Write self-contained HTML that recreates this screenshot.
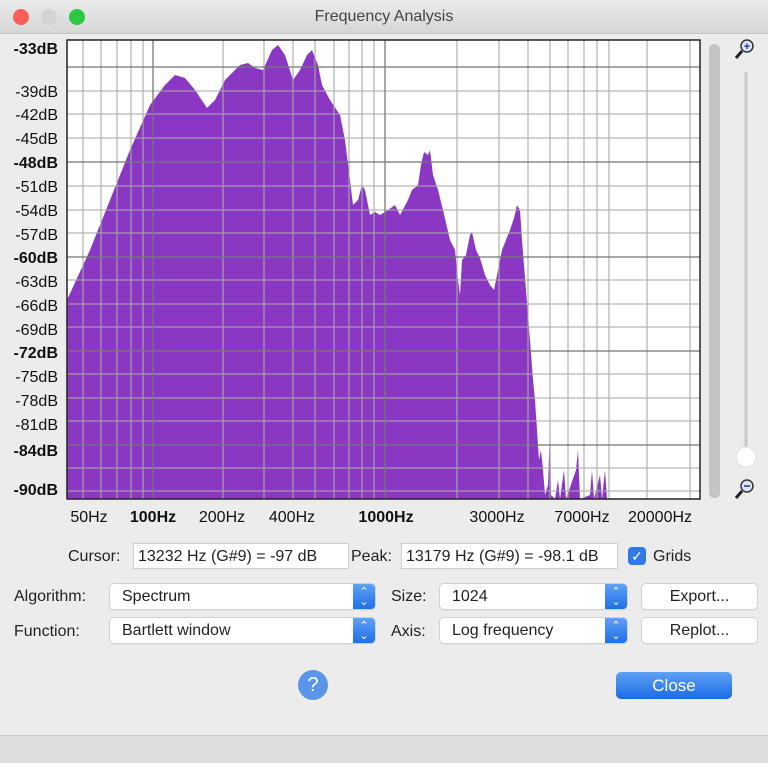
<!DOCTYPE html>
<html><head><meta charset="utf-8"><style>
body{margin:0;width:768px;height:762px;background:#ececec;font-family:"Liberation Sans",sans-serif;overflow:hidden;position:relative}
.tb{position:absolute;left:0;top:0;width:768px;height:33px;background:linear-gradient(#ebebeb,#d6d6d6);border-bottom:1px solid #c4c4c4}
.dot{position:absolute;top:9px;width:16px;height:16px;border-radius:50%}
.title{position:absolute;top:8px;left:0;width:768px;text-align:center;font-size:16px;color:#444}
.lbl{position:absolute;font-size:16px;color:#222}
.field{position:absolute;background:#fff;border:1px solid #cfcfcf;height:26px;font-size:16px;line-height:26px;padding-left:4px;overflow:hidden;white-space:nowrap;box-sizing:border-box;color:#222}
.sel{position:absolute;background:#fff;border-radius:4px;box-shadow:0 0 0 1px #d0d0d0,0 1px 1px #bbb;height:25px;font-size:16px;line-height:25px;padding-left:12px;box-sizing:border-box;color:#222}
.sel i{position:absolute;right:0;top:0;width:22px;height:25px;background:linear-gradient(#5ea2f5,#1f6fe6);border-radius:0 4px 4px 0;color:#fff;font-style:normal;font-size:11px;line-height:10px;text-align:center;padding-top:3px;box-sizing:border-box}
.btn{position:absolute;background:#fff;border-radius:4px;box-shadow:0 0 0 1px #d0d0d0,0 1px 1px #bbb;height:25px;font-size:16px;line-height:25px;text-align:center;color:#222}
</style></head><body>
<div class="tb"></div>
<div class="dot" style="left:13px;background:#fc5f57"></div>
<div class="dot" style="left:41px;background:#d4d4d4"></div>
<div class="dot" style="left:69px;background:#2ac940"></div>
<div class="title">Frequency Analysis</div>
<svg width="768" height="530" style="position:absolute;left:0;top:0" font-family="Liberation Sans" font-size="15">
<rect x="67" y="40" width="633" height="459" fill="#fff"/>
<g font-size="16" text-anchor="end" fill="#111">
<text x="58" y="54" font-weight="bold">-33dB</text>
<text x="58" y="97">-39dB</text><text x="58" y="120">-42dB</text><text x="58" y="144">-45dB</text>
<text x="58" y="168" font-weight="bold">-48dB</text><text x="58" y="192">-51dB</text><text x="58" y="216">-54dB</text><text x="58" y="240">-57dB</text>
<text x="58" y="263" font-weight="bold">-60dB</text><text x="58" y="287">-63dB</text><text x="58" y="311">-66dB</text><text x="58" y="335">-69dB</text>
<text x="58" y="358" font-weight="bold">-72dB</text><text x="58" y="382">-75dB</text><text x="58" y="406">-78dB</text><text x="58" y="430">-81dB</text>
<text x="58" y="456" font-weight="bold">-84dB</text>
<text x="58" y="495" font-weight="bold">-90dB</text>
</g>
<polygon fill="#8a38c4" points="67,499 67,300 90,250 110,200 130,150 150,105 165,85 175,75 185,78 195,90 207,108 215,100 225,80 240,65 248,63 255,68 263,70 272,50 278,45 285,55 293,80 300,70 307,55 312,50 318,65 322,85 330,100 340,115 345,140 350,180 353,205 358,200 362,185 365,190 370,215 375,212 380,215 388,210 395,205 400,215 408,200 412,190 418,185 421,165 424,152 428,155 430,150 433,175 438,190 443,210 450,240 455,250 458,280 460,295 462,260 466,255 470,235 472,232 476,250 480,258 485,275 490,285 494,290 498,270 502,250 506,240 510,230 514,218 517,205 520,210 522,240 526,290 530,340 533,380 535,400 537,430 539,460 541,450 543,470 545,495 548,485 550,430 551,495 555,499 558,480 560,499 564,470 566,499 576,470 578,450 580,499 590,495 592,470 594,499 600,475 602,499 605,470 607,499"/>
<g stroke="#aaa" stroke-width="1.3" opacity="0.85">
<line x1="83" y1="40" x2="83" y2="499"/><line x1="101" y1="40" x2="101" y2="499"/><line x1="117" y1="40" x2="117" y2="499"/><line x1="131" y1="40" x2="131" y2="499"/><line x1="143" y1="40" x2="143" y2="499"/>
<line x1="223" y1="40" x2="223" y2="499"/><line x1="264" y1="40" x2="264" y2="499"/><line x1="293" y1="40" x2="293" y2="499"/><line x1="315" y1="40" x2="315" y2="499"/><line x1="334" y1="40" x2="334" y2="499"/><line x1="349" y1="40" x2="349" y2="499"/><line x1="362" y1="40" x2="362" y2="499"/><line x1="374" y1="40" x2="374" y2="499"/>
<line x1="457" y1="40" x2="457" y2="499"/><line x1="499" y1="40" x2="499" y2="499"/><line x1="528" y1="40" x2="528" y2="499"/><line x1="550" y1="40" x2="550" y2="499"/><line x1="568" y1="40" x2="568" y2="499"/><line x1="584" y1="40" x2="584" y2="499"/><line x1="597" y1="40" x2="597" y2="499"/><line x1="609" y1="40" x2="609" y2="499"/><line x1="647" y1="40" x2="647" y2="499"/><line x1="690" y1="40" x2="690" y2="499"/>
<line x1="67" y1="91" x2="700" y2="91"/><line x1="67" y1="114" x2="700" y2="114"/><line x1="67" y1="138" x2="700" y2="138"/><line x1="67" y1="186" x2="700" y2="186"/><line x1="67" y1="210" x2="700" y2="210"/><line x1="67" y1="233" x2="700" y2="233"/><line x1="67" y1="280" x2="700" y2="280"/><line x1="67" y1="304" x2="700" y2="304"/><line x1="67" y1="327" x2="700" y2="327"/><line x1="67" y1="374" x2="700" y2="374"/><line x1="67" y1="398" x2="700" y2="398"/><line x1="67" y1="421" x2="700" y2="421"/><line x1="67" y1="468" x2="700" y2="468"/><line x1="67" y1="491" x2="700" y2="491"/>
</g>
<g stroke="#777" stroke-width="1.5" opacity="0.85">
<line x1="153" y1="40" x2="153" y2="499"/><line x1="385" y1="40" x2="385" y2="499"/>
<line x1="67" y1="67" x2="700" y2="67"/><line x1="67" y1="162" x2="700" y2="162"/><line x1="67" y1="257" x2="700" y2="257"/><line x1="67" y1="351" x2="700" y2="351"/><line x1="67" y1="445" x2="700" y2="445"/>
</g>
<rect x="67" y="40" width="633" height="459" fill="none" stroke="#222" stroke-width="1.5"/>
<g fill="#111" text-anchor="middle" font-size="16">
<text x="89" y="522">50Hz</text><text x="153" y="522" font-weight="bold">100Hz</text><text x="222" y="522">200Hz</text><text x="292" y="522">400Hz</text>
<text x="386" y="522" font-weight="bold">1000Hz</text><text x="497" y="522">3000Hz</text><text x="582" y="522">7000Hz</text><text x="660" y="522">20000Hz</text>
</g>
<rect x="709" y="44" width="11" height="454" rx="5" fill="#c4c4c4"/>
<line x1="746" y1="72" x2="746" y2="450" stroke="#c8c8c8" stroke-width="3"/>
<circle cx="746" cy="457" r="10" fill="#fff" stroke="#ddd"/>
<g><circle cx="747" cy="46" r="6" fill="#dde4f8" stroke="#333" stroke-width="1.5"/><line x1="742" y1="51" x2="736" y2="58" stroke="#222" stroke-width="3"/><text x="747" y="50" font-size="11" text-anchor="middle" fill="#2230a0" font-weight="bold">+</text></g>
<g><circle cx="747" cy="486" r="6" fill="#dde4f8" stroke="#333" stroke-width="1.5"/><line x1="742" y1="491" x2="736" y2="498" stroke="#222" stroke-width="3"/><line x1="744" y1="486" x2="750" y2="486" stroke="#2230a0" stroke-width="1.5"/></g>
</svg>
<div class="lbl" style="left:68px;top:548px">Cursor:</div>
<div class="field" style="left:133px;top:543px;width:216px">13232 Hz (G#9) = -97 dB</div>
<div class="lbl" style="left:351px;top:548px">Peak:</div>
<div class="field" style="left:401px;top:543px;width:217px">13179 Hz (G#9) = -98.1 dB</div>
<div style="position:absolute;left:628px;top:547px;width:18px;height:18px;border-radius:4px;background:#2f7ae8;color:#fff;font-size:14px;line-height:18px;text-align:center">✓</div>
<div class="lbl" style="left:653px;top:548px">Grids</div>
<div class="lbl" style="left:14px;top:588px">Algorithm:</div>
<div class="sel" style="left:110px;top:584px;width:265px">Spectrum<i>⌃<br>⌄</i></div>
<div class="lbl" style="left:391px;top:588px">Size:</div>
<div class="sel" style="left:440px;top:584px;width:187px">1024<i>⌃<br>⌄</i></div>
<div class="btn" style="left:642px;top:584px;width:115px">Export...</div>
<div class="lbl" style="left:14px;top:623px">Function:</div>
<div class="sel" style="left:110px;top:618px;width:265px">Bartlett window<i>⌃<br>⌄</i></div>
<div class="lbl" style="left:391px;top:623px">Axis:</div>
<div class="sel" style="left:440px;top:618px;width:187px">Log frequency<i>⌃<br>⌄</i></div>
<div class="btn" style="left:642px;top:618px;width:115px">Replot...</div>
<div style="position:absolute;left:298px;top:670px;width:30px;height:30px;border-radius:50%;background:#5b95ea;color:#fff;font-size:20px;line-height:30px;text-align:center">?</div>
<div style="position:absolute;left:616px;top:672px;width:116px;height:27px;border-radius:5px;background:linear-gradient(#5ea2f5,#1a6ae4);color:#fff;font-size:17px;line-height:27px;text-align:center">Close</div>
<div style="position:absolute;left:0;top:735px;width:768px;height:27px;background:#dedede;border-top:1px solid #c8c8c8"></div>
</body></html>
